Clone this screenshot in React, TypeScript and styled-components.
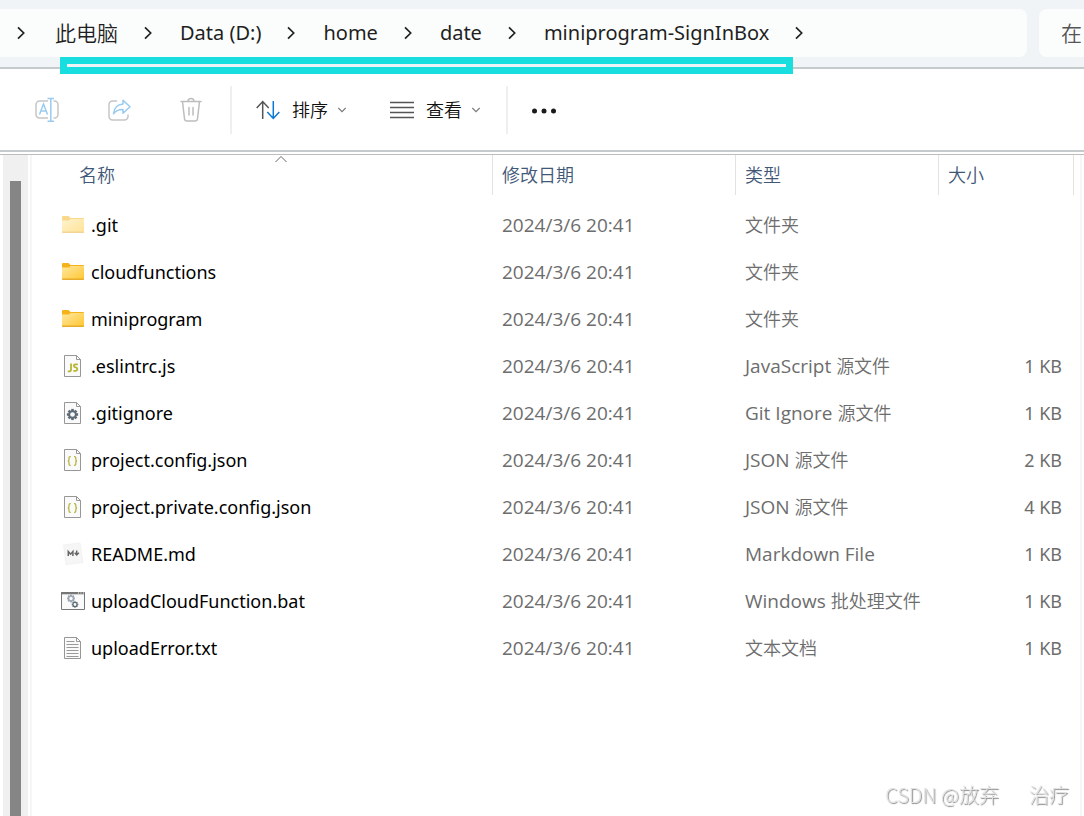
import React from "react";
import styled, { createGlobalStyle } from "styled-components";

const GlobalStyle = createGlobalStyle`
  *, *::before, *::after { box-sizing: border-box; }
  body {
    margin: 0;
    background: #fff;
    font-family: "Noto Sans", "Noto Sans CJK SC", sans-serif;
    font-size: 18px;
    line-height: 24px;
    color: #000;
  }
  button, input { font: inherit; color: inherit; }
`;

const Window = styled.div`
  display: flex;
  flex-direction: column;
  min-height: 100vh;
  overflow: hidden;
`;

const TopBar = styled.header`
  display: flex;
  gap: 12px;
  padding: 9px 0 10px;
  background: #f1f4f6;
  border-bottom: 2px solid #c5cacd;
`;

const AddressBar = styled.nav`
  position: relative;
  flex: 1;
  min-width: 0;
  height: 48px;
  padding-left: 17px;
  display: flex;
  align-items: center;
  gap: 2px;
  background: #fbfdfc;
  border-radius: 0 8px 8px 0;
  font-size: 20px;
  color: #1f1f1f;
`;

const CrumbList = styled.ol`
  display: flex;
  align-items: center;
  margin: 0;
  padding: 0;
  list-style: none;
`;

const Crumb = styled.li`
  display: flex;
  align-items: center;
  gap: 26px;
  margin-left: 28px;
`;

const CrumbLink = styled.a<{ $cjk?: boolean }>`
  font-size: ${(p) => (p.$cjk ? 21 : 20)}px;
  font-weight: ${(p) => (p.$cjk ? 350 : 400)};
  color: inherit;
  text-decoration: none;
  white-space: nowrap;
`;

const Highlight = styled.div`
  position: absolute;
  top: 48px;
  left: 60px;
  width: 733px;
  height: 17px;
  border: 7px solid #18dedf;
  background: #f1f4f6;
`;

const SearchInput = styled.input`
  width: 45px;
  height: 48px;
  padding: 0 0 0 22px;
  border: 0;
  border-radius: 8px 0 0 8px;
  background: #fbfdfc;
  font-size: 21px;
  font-weight: 350;
  &::placeholder { color: #555; opacity: 1; }
`;

const Toolbar = styled.div`
  display: flex;
  align-items: center;
  height: 83px;
  padding-left: 35px;
  border-bottom: 2px solid #c5cacd;
`;

const IconGroup = styled.div`
  display: flex;
  gap: 48px;
  margin-right: 27px;
`;

const MenuGroup = styled.div`
  display: flex;
  gap: 44px;
  margin: 0 26px 0 24px;
`;

const ToolButton = styled.button`
  display: flex;
  align-items: center;
  padding: 0;
  border: 0;
  background: none;
  color: #111;
`;

const ToolLabel = styled.span`
  margin: 0 10px 0 12px;
  font-weight: 350;
`;

const ToolDivider = styled.div`
  width: 2px;
  height: 48px;
  background: #efefef;
`;

const MoreButton = styled(ToolButton)`
  margin-left: 24px;
`;

const Content = styled.main`
  flex: 1;
  display: flex;
  margin-top: 2px;
  padding: 0 2px 0 3px;
  border-top: 1px solid #bdbdbd;
`;

const Scrollbar = styled.div`
  display: flex;
  width: 25px;
  padding: 26px 7px 0;
  background: #f0f0f0;
`;

const ScrollThumb = styled.div`
  flex: 1;
  background: #858585;
`;

const Pane = styled.section`
  flex: 1;
  min-width: 0;
  margin-left: 2px;
  padding-right: 6px;
  border: solid #f6f6f6;
  border-width: 0 2px;
`;

const FileTable = styled.table`
  width: 100%;
  table-layout: fixed;
  border-collapse: separate;
  border-spacing: 0;
  & tbody::before { content: ""; display: block; height: 6px; }
`;

const Col = styled.col<{ $width?: number }>`
  width: ${(p) => (p.$width ? `${p.$width}px` : "auto")};
`;

const HeadCell = styled.th<{ $indent?: number }>`
  position: relative;
  height: 40px;
  padding: 0 0 0 ${(p) => p.$indent ?? 9}px;
  border-right: 1px solid #e2e2e2;
  text-align: left;
  font-weight: 350;
  color: #3f5878;
`;

const SortMark = styled.svg`
  position: absolute;
  top: 0;
  left: 50%;
  margin-left: 13px;
`;

const Cell = styled.td`
  height: 47px;
  padding: 0 0 0 9px;
  color: #6d6d6d;
  white-space: nowrap;
`;

const DetailCell = styled(Cell)`
  font-family: "Open Sans", "Noto Sans CJK SC", sans-serif;
  font-size: 19px;
`;

const SizeCell = styled(Cell)`
  padding-right: 12px;
  text-align: right;
`;

const Cjk = styled.span`
  font-size: 18px;
  font-weight: 350;
`;

const NameCell = styled(Cell)`
  padding-left: 29px;
  color: #000;
`;

const FileName = styled.div`
  display: flex;
  align-items: center;
  gap: 6px;
`;

const Watermark = styled.div`
  position: fixed;
  right: 15px;
  bottom: 9px;
  display: flex;
  gap: 30px;
  font-family: "Noto Sans CJK SC", sans-serif;
  font-size: 20px;
  font-weight: 300;
  line-height: 24px;
  color: #e2e2e2;
  text-shadow: 1px 1px 1px #8c8c8c;
`;

const Chevron = () => (
  <svg width="8" height="14" viewBox="0 0 8 14" fill="none" stroke="#222" strokeWidth="1.7">
    <path d="M1 1.3 6.7 7 1 12.7" />
  </svg>
);

const DownMark = () => (
  <svg width="8" height="6" viewBox="0 0 8 6" fill="none" stroke="#777" strokeWidth="1.1">
    <path d="M.3 1 4 4.7 7.7 1" />
  </svg>
);

const RenameIcon = () => (
  <svg width="24" height="26" viewBox="0 0 24 26" fill="none" strokeWidth="1.5">
    <path d="M13 4H4.5A3.5 3.5 0 0 0 1 7.500v10A3.500 3.500 0 0 0 4.500 21H13M18.500 4h1A3.500 3.500 0 0 1 23 7.500v10a3.500 3.500 0 0 1-3.500 3.500h-1" stroke="#c6c6c6" />
    <path d="M12.500 1.500h6.500M12.500 24.200h6.500M15.800 1.500v22.700M4.500 17.500 8.500 7l4 10.500M6 14h5" stroke="#99cbef" />
  </svg>
);

const ShareIcon = () => (
  <svg width="24" height="24" viewBox="0 0 24 24" fill="none" strokeWidth="1.500" strokeLinejoin="round">
    <path d="M9.500 3H5.500A3.500 3.500 0 0 0 2 6.500v12A3.500 3.500 0 0 0 5.500 22h12a3.500 3.500 0 0 0 3.500-3.500v-1.500" stroke="#c6c6c6" strokeLinecap="round" />
    <path d="M16 2.200 23 8.800l-7 6.500V11.500c-4-.2-7 1-9.500 4.200C7 10 10.500 6.500 16 6Z" stroke="#99cbef" />
  </svg>
);

const TrashIcon = () => (
  <svg width="24" height="26" viewBox="0 0 24 26" fill="none" stroke="#bdbdbd" strokeWidth="1.500" strokeLinecap="round">
    <path d="M2 4.500h20M9 4.500a3 3 0 0 1 6 0M3.500 4.500l2 17.200A2.500 2.500 0 0 0 8 24h8a2.500 2.500 0 0 0 2.500-2.300l2-17.200M10 10.500v7.500M14 10.500v7.500" />
  </svg>
);

const SortIcon = () => (
  <svg width="24" height="20" viewBox="0 0 24 20" fill="none" strokeWidth="1.500">
    <path d="M6.700 19V1.500M.7 8l6-6.500 6 6.500" stroke="#555" />
    <path d="M17.300 1v17.500M11.300 12l6 6.500 6-6.500" stroke="#0c78d4" />
  </svg>
);

const ViewIcon = () => (
  <svg width="24" height="18" viewBox="0 0 24 18" stroke="#555" strokeWidth="1.300">
    <path d="M0 1.500h24M0 6.500h24M0 11.500h24M0 16.500h24" />
  </svg>
);

const MoreIcon = () => (
  <svg width="24" height="8" viewBox="0 0 24 8" fill="#1b1b1b">
    <circle cx="2.500" cy="5" r="2.500" />
    <circle cx="12" cy="5" r="2.500" />
    <circle cx="21.500" cy="5" r="2.500" />
  </svg>
);

type Kind = "hidden" | "folder" | "js" | "gear" | "json" | "md" | "bat" | "txt";

const Gear = ({ x, y, r, color, hole = "#fafafa" }: { x: number; y: number; r: number; color: string; hole?: string }) => (
  <g>
    <circle cx={x} cy={y} r={r * 0.76} fill={color} />
    <g stroke={color} strokeWidth={r * 0.46}>
      {[0, 45, 90, 135].map((a) => (
        <path key={a} d={`M${x} ${y - r}V${y + r}`} transform={`rotate(${a} ${x} ${y})`} />
      ))}
    </g>
    <circle cx={x} cy={y} r={r * 0.42} fill={hole} />
  </g>
);

const Sheet = () => (
  <path d="M3.500 1.500h12l4 4v17h-16zM15.500 1.500v4h4" fill="#fafafa" stroke="#979797" />
);

const Folder = ({ faded }: { faded?: boolean }) => (
  <g opacity={faded ? 0.5 : 1}>
    <defs>
      <linearGradient id="folderFill" x1="0" y1="0" x2="1" y2="1">
        <stop offset="0" stopColor="#ffe8a0" />
        <stop offset="1" stopColor="#ffc62f" />
      </linearGradient>
    </defs>
    <path d="M1 4a1 1 0 0 1 1-1h5.500l2 2H22a1 1 0 0 1 1 1v3H1z" fill="#f6b21b" />
    <path d="M1 7.500h7L9.500 6H23v13a1 1 0 0 1-1 1H2a1 1 0 0 1-1-1z" fill="url(#folderFill)" />
    <path d="M1 18.500v.5a1 1 0 0 0 1 1h20a1 1 0 0 0 1-1v-.5z" fill="#e8ab2c" />
  </g>
);

const drawings: Record<Kind, React.ReactNode> = {
  hidden: <Folder faded />,
  folder: <Folder />,
  js: (
    <>
      <Sheet />
      <path d="M10 9.500v6q0 1.800-1.500 1.800H6.800M16.800 10.300h-2.200q-1.700 0-1.700 1.500t1.700 1.600 1.700 1.700-1.700 1.800h-2.200" fill="none" stroke="#b7b52f" strokeWidth="1.800" />
    </>
  ),
  gear: (
    <>
      <Sheet />
      <Gear x={11.5} y={13.5} r={5.6} color="#5d6b76" />
    </>
  ),
  json: (
    <>
      <Sheet />
      <path d="M9.800 8.700H9.200q-1.200 0-1.200 1.300v1.600q0 1.400-1.200 1.400 1.200 0 1.200 1.400v1.600q0 1.300 1.200 1.300h.6M13 8.700h.6q1.200 0 1.200 1.300v1.600q0 1.400 1.200 1.400-1.200 0-1.200 1.400v1.600q0 1.300-1.200 1.300H13" fill="none" stroke="#b7b743" strokeWidth="1.300" />
    </>
  ),
  md: (
    <>
      <path d="M2.500 3 19 1l3 19.500L5 22.700z" fill="#f6f6f6" stroke="#ededed" strokeWidth=".6" />
      <path d="M7.300 14V9.500l2.300 2.700 2.300-2.700V14M15.700 8.500v4M13.700 10.800l2 2.200 2.200-2.200" fill="none" stroke="#666" strokeWidth="1.500" />
    </>
  ),
  bat: (
    <>
      <path d="M.5 3.500h23v17H.5z" fill="#fafafa" stroke="#777" />
      <path d="M0 4.200h24" stroke="#777" strokeWidth="2.200" />
      <path d="M17 4h1M19.500 4h1M22 4h1" stroke="#fff" />
      <Gear x={10} y={9.5} r={4} color="#9aa5b1" />
      <Gear x={14} y={15.500} r={3.300} color="#5d6b76" />
    </>
  ),
  txt: (
    <>
      <Sheet />
      <path d="M5.500 5.500h8M5.500 8.500h12M5.500 11.500h12M5.500 14.500h12M5.500 17.500h12M5.500 20.500h12" stroke="#999" />
    </>
  ),
};

const FileIcon = ({ kind }: { kind: Kind }) => (
  <svg width="24" height="24" viewBox="0 0 24 24" aria-hidden="true">
    {drawings[kind]}
  </svg>
);

const crumbs: { label: string; cjk?: boolean }[] = [
  { label: "此电脑", cjk: true },
  { label: "Data (D:)" },
  { label: "home" },
  { label: "date" },
  { label: "miniprogram-SignInBox" },
];

const files: { kind: Kind; name: string; type?: string; typeCjk?: string; size?: string }[] = [
  { kind: "hidden", name: ".git", typeCjk: "文件夹" },
  { kind: "folder", name: "cloudfunctions", typeCjk: "文件夹" },
  { kind: "folder", name: "miniprogram", typeCjk: "文件夹" },
  { kind: "js", name: ".eslintrc.js", type: "JavaScript ", typeCjk: "源文件", size: "1 KB" },
  { kind: "gear", name: ".gitignore", type: "Git Ignore ", typeCjk: "源文件", size: "1 KB" },
  { kind: "json", name: "project.config.json", type: "JSON ", typeCjk: "源文件", size: "2 KB" },
  { kind: "json", name: "project.private.config.json", type: "JSON ", typeCjk: "源文件", size: "4 KB" },
  { kind: "md", name: "README.md", type: "Markdown File", size: "1 KB" },
  { kind: "bat", name: "uploadCloudFunction.bat", type: "Windows ", typeCjk: "批处理文件", size: "1 KB" },
  { kind: "txt", name: "uploadError.txt", typeCjk: "文本文档", size: "1 KB" },
];

export default function App() {
  return (
    <>
      <GlobalStyle />
      <Window>
        <TopBar>
          <AddressBar aria-label="路径">
            <Chevron />
            <CrumbList>
              {crumbs.map((c) => (
                <Crumb key={c.label}>
                  <CrumbLink href="#" $cjk={c.cjk}>{c.label}</CrumbLink>
                  <Chevron />
                </Crumb>
              ))}
            </CrumbList>
            <Highlight />
          </AddressBar>
          <SearchInput type="text" placeholder="在" aria-label="搜索" />
        </TopBar>
        <Toolbar role="toolbar">
          <IconGroup>
            <ToolButton aria-label="重命名"><RenameIcon /></ToolButton>
            <ToolButton aria-label="共享"><ShareIcon /></ToolButton>
            <ToolButton aria-label="删除"><TrashIcon /></ToolButton>
          </IconGroup>
          <ToolDivider />
          <MenuGroup>
            <ToolButton><SortIcon /><ToolLabel>排序</ToolLabel><DownMark /></ToolButton>
            <ToolButton><ViewIcon /><ToolLabel>查看</ToolLabel><DownMark /></ToolButton>
          </MenuGroup>
          <ToolDivider />
          <MoreButton aria-label="更多"><MoreIcon /></MoreButton>
        </Toolbar>
        <Content>
          <Scrollbar><ScrollThumb /></Scrollbar>
          <Pane>
            <FileTable>
              <colgroup>
                <Col />
                <Col $width={243} />
                <Col $width={203} />
                <Col $width={135} />
              </colgroup>
              <thead>
                <tr>
                  <HeadCell $indent={47} aria-sort="ascending">
                    名称
                    <SortMark width="12" height="8" viewBox="0 0 12 8" fill="none" stroke="#666">
                      <path d="M.5 7 6 1.500 11.500 7" />
                    </SortMark>
                  </HeadCell>
                  <HeadCell>修改日期</HeadCell>
                  <HeadCell>类型</HeadCell>
                  <HeadCell>大小</HeadCell>
                </tr>
              </thead>
              <tbody>
                {files.map((f) => (
                  <tr key={f.name}>
                    <NameCell>
                      <FileName><FileIcon kind={f.kind} />{f.name}</FileName>
                    </NameCell>
                    <DetailCell>2024/3/6 20:41</DetailCell>
                    <DetailCell>{f.type}<Cjk>{f.typeCjk}</Cjk></DetailCell>
                    <SizeCell>{f.size}</SizeCell>
                  </tr>
                ))}
              </tbody>
            </FileTable>
          </Pane>
        </Content>
      </Window>
      <Watermark><span>CSDN @放弃</span><span>治疗</span></Watermark>
    </>
  );
}
